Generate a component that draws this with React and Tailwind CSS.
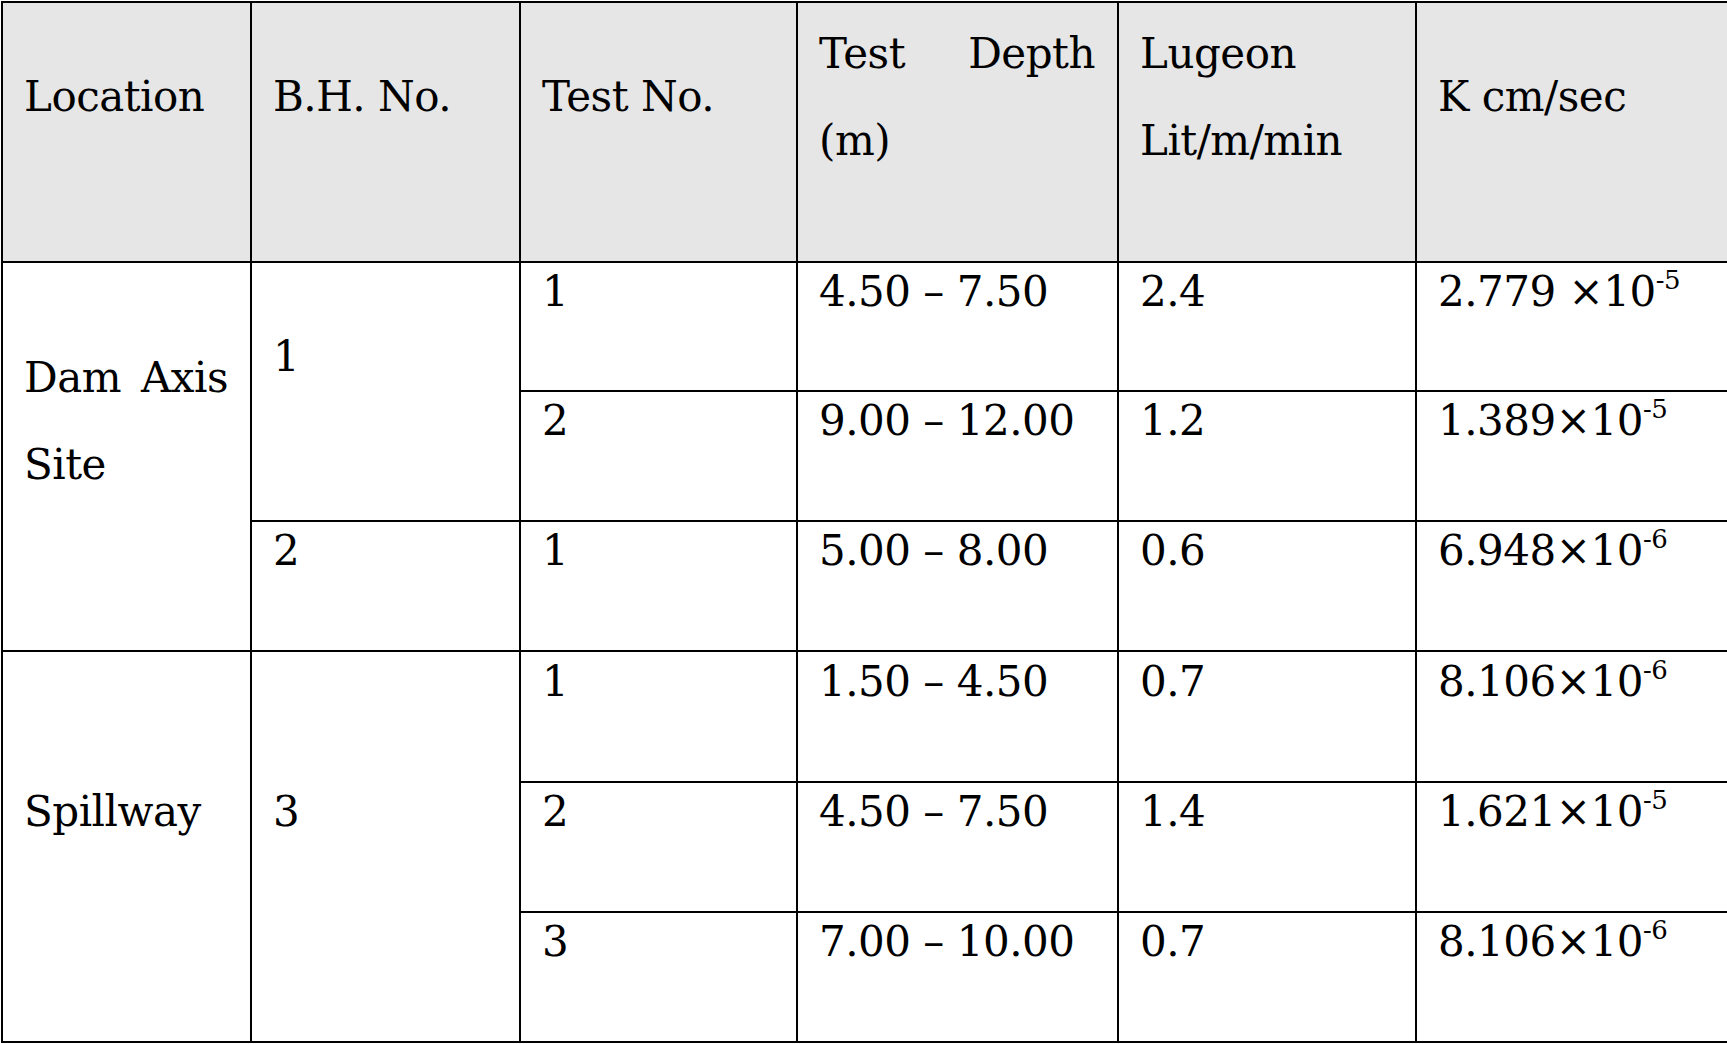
import React from "react";

const cellBase =
  "flex items-center pb-[71px] pl-[21px] pr-[22px] border-b-2 border-black";

function Cell({ children, className = "", last = false }) {
  return (
    <div className={`${cellBase} ${last ? "" : "border-r-2"} ${className}`}>
      <div className="w-full text-justify">{children}</div>
    </div>
  );
}

function K({ base, exp, space }) {
  return (
    <span className="whitespace-nowrap">
      {base}
      {space ? " " : ""}×10
      <sup className="text-[26px] top-[-17px]">{exp}</sup>
    </span>
  );
}

export default function App() {
  return (
    <div className="w-[1727px] h-[1044px] overflow-hidden bg-white pt-[1px] pl-[1px]">
      <div className="grid grid-cols-[249px_269px_277px_321px_298px_1fr] grid-rows-[260px_129px_130px_130px_131px_130px_130px] border-l-2 border-t-2 border-black text-black text-[42px] tracking-[-0.5px] leading-[87px] font-['DejaVu_Serif',serif]">
        {/* Header */}
        <Cell className="bg-[#e6e6e6]">Location</Cell>
        <Cell className="bg-[#e6e6e6]">B.H. No.</Cell>
        <Cell className="bg-[#e6e6e6]">Test No.</Cell>
        <Cell className="bg-[#e6e6e6]">Test Depth (m)</Cell>
        <Cell className="bg-[#e6e6e6]">Lugeon Lit/m/min</Cell>
        <Cell className="bg-[#e6e6e6]" last>
          K cm/sec
        </Cell>

        {/* Dam Axis Site */}
        <Cell className="col-start-1 row-start-2 row-span-3">Dam Axis Site</Cell>
        <Cell className="col-start-2 row-start-2 row-span-2">1</Cell>
        <Cell className="col-start-3 row-start-2">1</Cell>
        <Cell className="col-start-4 row-start-2">4.50 – 7.50</Cell>
        <Cell className="col-start-5 row-start-2">2.4</Cell>
        <Cell className="col-start-6 row-start-2" last>
          <K base="2.779" exp="-5" space />
        </Cell>

        <Cell className="col-start-3 row-start-3">2</Cell>
        <Cell className="col-start-4 row-start-3">9.00 – 12.00</Cell>
        <Cell className="col-start-5 row-start-3">1.2</Cell>
        <Cell className="col-start-6 row-start-3" last>
          <K base="1.389" exp="-5" />
        </Cell>

        <Cell className="col-start-2 row-start-4">2</Cell>
        <Cell className="col-start-3 row-start-4">1</Cell>
        <Cell className="col-start-4 row-start-4">5.00 – 8.00</Cell>
        <Cell className="col-start-5 row-start-4">0.6</Cell>
        <Cell className="col-start-6 row-start-4" last>
          <K base="6.948" exp="-6" />
        </Cell>

        {/* Spillway */}
        <Cell className="col-start-1 row-start-5 row-span-3">Spillway</Cell>
        <Cell className="col-start-2 row-start-5 row-span-3">3</Cell>
        <Cell className="col-start-3 row-start-5">1</Cell>
        <Cell className="col-start-4 row-start-5">1.50 – 4.50</Cell>
        <Cell className="col-start-5 row-start-5">0.7</Cell>
        <Cell className="col-start-6 row-start-5" last>
          <K base="8.106" exp="-6" />
        </Cell>

        <Cell className="col-start-3 row-start-6">2</Cell>
        <Cell className="col-start-4 row-start-6">4.50 – 7.50</Cell>
        <Cell className="col-start-5 row-start-6">1.4</Cell>
        <Cell className="col-start-6 row-start-6" last>
          <K base="1.621" exp="-5" />
        </Cell>

        <Cell className="col-start-3 row-start-7">3</Cell>
        <Cell className="col-start-4 row-start-7">7.00 – 10.00</Cell>
        <Cell className="col-start-5 row-start-7">0.7</Cell>
        <Cell className="col-start-6 row-start-7" last>
          <K base="8.106" exp="-6" />
        </Cell>
      </div>
    </div>
  );
}
